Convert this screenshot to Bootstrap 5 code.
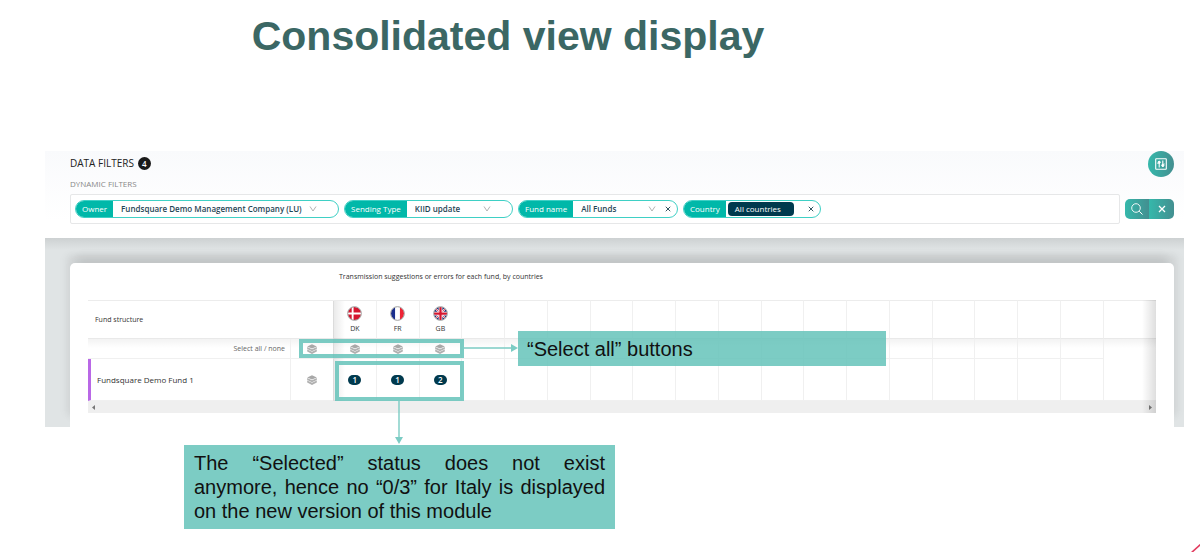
<!DOCTYPE html>
<html lang="en">
<head>
<meta charset="utf-8">
<meta name="viewport" content="width=device-width, initial-scale=1">
<title>Consolidated view display</title>
<link href="https://cdn.jsdelivr.net/npm/bootstrap@5.3.0/dist/css/bootstrap.min.css" rel="stylesheet">
<style>
  :root { --teal: #00b8a9; --navy: #003a4e; --note: rgba(95, 193, 183, .82); --line: #f0f0f0; }
  body { font-family: "Liberation Sans", Arial, sans-serif; color: #111; background: #fff; }
  .slide { min-height: 100vh; overflow: hidden; }
  .slide-title { font-size: 41px; line-height: 48px; font-weight: 700; color: #3b6764; padding: 12px 184px 91px 0; margin: 0; }
  .app { margin: 0 16px 0 45px; font-family: "Open Sans", "Noto Sans", sans-serif; background: #e0e4e5; }

  .filters { background: linear-gradient(#f9fafc, #fff 80%); padding: 0 10px 14px 25px; }
  .filters-title { font-size: 10px; line-height: 24px; color: #222; margin: 0; }
  .count { width: 13px; height: 13px; font-size: 8px; line-height: 13px; font-weight: 600; background: #1a1a1a; color: #fff; }
  .filters-sub { font-size: 8px; line-height: 17px; color: #888; margin: 0; padding-bottom: 2px; }
  .round-btn { width: 26px; height: 26px; margin-bottom: -2px; border: 0; padding: 0; background: linear-gradient(90deg, #35b8ab, #438f90); }
  .filter-box { border: 1px solid #e6e7e8; border-radius: 2px; background: #fff; height: 30px; padding: 0 4px; gap: 5px; }
  .pill { height: 18px; border: 1px solid #3fd0c5; border-radius: 9px; background: #fff; overflow: hidden; font-size: 8px; line-height: 16px; position: relative; }
  .pill-name { background: var(--teal); color: #fff; padding: 0 6px; height: 16px; white-space: nowrap; }
  .pill select { appearance: none; flex: 1 1 0; min-width: 0; border: 0; background: transparent; padding: 0 0 0 8px; font-weight: 600; color: #1f4555; height: 16px; line-height: 16px; outline: 0; }
  .pill button { border: 0; background: none; padding: 0; width: 18px; height: 16px; color: #2d4f5c; }
  .chev { right: 21px; top: 5px; pointer-events: none; }
  .tag { background: var(--navy); color: #fff; border-radius: 4px; width: 66px; height: 14px; line-height: 14px; padding-left: 7px; margin: 1px 0 0 2px; font-weight: 500; }
  .w-owner { width: 264px; } .w-type { width: 169px; } .w-fund { width: 160px; } .w-country { width: 138px; }
  .actions { margin-left: 5px; border-radius: 5px; overflow: hidden; }
  .actions button { width: 24px; height: 20px; border: 0; padding: 0; background: linear-gradient(90deg, #35b8ab, #438f90); }
  .actions button + button { width: 25px; }

  .board { background: linear-gradient(#cdd1d2, #e0e4e5 12px); padding: 25px 10px 0 25px; }
  .panel { background: #fff; border-radius: 5px 5px 0 0; padding: 7px 18px 14px; box-shadow: 0 -8px 8px rgba(0,0,0,.04), 6px -10px 8px -2px rgba(0,0,0,.05), -6px -10px 8px -2px rgba(0,0,0,.05); }
  .panel-caption { font-size: 7px; line-height: 14px; color: #333; margin: 0 0 16px 251px; }
  .grid-wrap { position: relative; }
  .fund-grid { table-layout: fixed; width: 100%; border-collapse: separate; border-spacing: 0; color: #333; background: #fff; line-height: 10px; font-size: 8px; }
  .fund-grid th, .fund-grid td { padding: 0; text-align: center; font-weight: 400; vertical-align: middle; border-right: 1px solid var(--line); }
  .fund-grid .last { border-right: 0; }
  .fund-grid thead th { height: 39px; border-top: 1px solid #ececec; border-bottom: 1px solid #e9e9e9; font-size: 7px; }
  .fund-grid thead th:first-child { text-align: left; padding-left: 7px; }
  .fund-grid .pick th, .fund-grid .pick td { height: 20px; border-bottom: 1px solid #f0f0f0; background: linear-gradient(#f3f3f3, #fff 9px); }
  .fund-grid .pick th { font-size: 7px; text-align: right; padding-right: 5px; color: #666; }
  .fund-grid .fund th, .fund-grid .fund td { height: 42px; border-bottom: 1px solid #f0f0f0; }
  .fund-grid .fund th { text-align: left; font-size: 8px; font-weight: 500; padding-left: 6px; border-left: 3px solid #b968e6; }
  .edge-left { left: 245px; top: 1px; width: 12px; height: 100px; background: linear-gradient(90deg, rgba(0,0,0,.09), rgba(0,0,0,0)); pointer-events: none; }
  .edge-right { right: 0; top: 0; bottom: 0; width: 14px; background: linear-gradient(90deg, rgba(0,0,0,0), rgba(0,0,0,.13)); pointer-events: none; }
  .c-name { width: 203px; } .c-all { width: 43px; } .c-end { width: 52px; }
  .icon-btn { border: 0; background: none; padding: 0; line-height: 0; display: block; margin: 0 auto; }
  .flag { display: block; margin: 0 auto 3px; }
  .qty { display: block; margin: 0 auto; width: 13px; height: 10px; border-radius: 5px; background: var(--navy); color: #fff; font-size: 8px; line-height: 10px; font-weight: 600; }
  .bar { height: 12px; background: #efefef; padding: 0 4px; }

  .mark-box { border: 4px solid var(--note); }
  .mark-select { left: 211px; top: 39px; width: 165px; height: 19px; }
  .mark-counts { left: 247px; top: 61px; width: 129px; height: 40px; }
  .arrow-right { left: 375px; top: 44px; }
  .arrow-down { left: 307px; top: 98px; }
  .note { background: var(--note); font: 20px/24px "Liberation Sans", Arial, sans-serif; color: #111; padding: 6px 10px; }
  .note-select { left: 430px; top: 31px; width: 368px; padding: 6px 9px 5px; }
  .note-status { width: 431px; max-width: 100%; margin: 18px 0 0 184px; }
  .full-line { display: block; text-align: justify; text-align-last: justify; }
  .corner { right: 0; bottom: 0; }
</style>
</head>
<body>
<svg class="d-none" aria-hidden="true">
  <symbol id="layers" viewBox="0 0 10 10">
    <path d="M5 .2 9.8 2.4 5 4.6 .2 2.4Z" fill="#a8a8a8"/>
    <path d="M.2 3.1 5 5.2 9.8 3.1v1.9L5 7.2.2 5ZM.2 5.6 5 7.7 9.8 5.6v2L5 9.9.2 7.6Z" fill="#b0b0b0"/>
  </symbol>
  <symbol id="chevron" viewBox="0 0 8 6"><path d="M1 .5 4 5 7 .5" fill="none" stroke="#aaa" stroke-width=".9"/></symbol>
  <symbol id="cross" viewBox="0 0 8 8"><path d="M1 1 7 7M7 1 1 7" fill="none" stroke="currentColor" stroke-width="1.3"/></symbol>
</svg>

<div class="slide position-relative">
  <h1 class="slide-title text-center">Consolidated view display</h1>

  <main class="app">
    <section class="filters">
      <div class="d-flex justify-content-between">
        <h2 class="filters-title d-flex align-items-center">DATA FILTERS <span class="count rounded-circle text-center ms-1">4</span></h2>
        <button class="round-btn rounded-circle d-flex align-items-center justify-content-center" type="button" aria-label="Filter settings">
          <svg width="12" height="12" viewBox="0 0 12 12" fill="none" stroke="#fff"><rect x=".7" y=".7" width="10.6" height="10.6" rx=".5" stroke-width="1.1"/><path d="M4.2 3v6.5M7.8 2.5V9" stroke-width="1.1"/><circle cx="4.2" cy="4.3" r="1.1" fill="#fff"/><circle cx="7.8" cy="7.4" r="1.1" fill="#fff"/><path d="M2.3 5.4h1.2M8.4 6h1.4" stroke-width=".8"/></svg>
        </button>
      </div>
      <p class="filters-sub">DYNAMIC FILTERS</p>
      <div class="d-flex align-items-center">
        <div class="filter-box d-flex align-items-center flex-grow-1">
          <div class="pill w-owner d-flex">
            <label class="pill-name" for="owner">Owner</label>
            <select id="owner"><option>Fundsquare Demo Management Company (LU)</option></select>
            <svg class="chev position-absolute" width="8" height="6"><use href="#chevron"/></svg>
          </div>
          <div class="pill w-type d-flex">
            <label class="pill-name" for="stype">Sending Type</label>
            <select id="stype"><option>KIID update</option></select>
            <svg class="chev position-absolute" width="8" height="6"><use href="#chevron"/></svg>
          </div>
          <div class="pill w-fund d-flex">
            <label class="pill-name" for="fname">Fund name</label>
            <select id="fname"><option>All Funds</option></select>
            <svg class="chev position-absolute" width="8" height="6"><use href="#chevron"/></svg>
            <button type="button" aria-label="Remove fund name"><svg class="d-block mx-auto" width="6" height="6"><use href="#cross"/></svg></button>
          </div>
          <div class="pill w-country d-flex">
            <span class="pill-name">Country</span>
            <span class="tag">All countries</span>
            <button class="ms-auto" type="button" aria-label="Remove country"><svg class="d-block mx-auto" width="6" height="6"><use href="#cross"/></svg></button>
          </div>
        </div>
        <div class="actions d-flex">
          <button type="button" aria-label="Search"><svg class="d-block mx-auto" width="12" height="12" viewBox="0 0 12 12" fill="none" stroke="#fff"><circle cx="5" cy="5" r="4.3" stroke-width=".9"/><path d="m8.2 8.2 3.3 3.3"/></svg></button>
          <button class="text-white" type="button" aria-label="Clear"><svg class="d-block mx-auto" width="8" height="8"><use href="#cross"/></svg></button>
        </div>
      </div>
    </section>

    <section class="board">
      <div class="panel">
        <p class="panel-caption">Transmission suggestions or errors for each fund, by countries</p>
        <div class="grid-wrap">
          <table class="fund-grid">
            <colgroup><col class="c-name"><col class="c-all"><col span="18"><col class="c-end"></colgroup>
            <thead>
              <tr>
                <th colspan="2" scope="col">Fund structure</th>
                <th scope="col"><svg class="flag" width="15" height="15" viewBox="0 0 16 16"><clipPath id="r"><circle cx="8" cy="8" r="7"/></clipPath><g clip-path="url(#r)"><path fill="#d5162f" d="M0 0h16v16H0z"/><path stroke="#fff" stroke-width="2" d="M6 0v16M0 8h16"/></g><circle cx="8" cy="8" r="7.3" fill="none" stroke="#999"/></svg>DK</th>
                <th scope="col"><svg class="flag" width="15" height="15" viewBox="0 0 16 16"><g clip-path="url(#r)"><path fill="#fff" d="M0 0h16v16H0z"/><path fill="#1c2f8c" d="M0 0h5.4v16H0z"/><path fill="#ee2536" d="M10.6 0H16v16h-5.4z"/></g><circle cx="8" cy="8" r="7.3" fill="none" stroke="#999"/></svg>FR</th>
                <th scope="col"><svg class="flag" width="15" height="15" viewBox="0 0 16 16"><g clip-path="url(#r)"><path fill="#1c2f74" d="M0 0h16v16H0z"/><path stroke="#fff" stroke-width="2" d="m0 0 16 16M16 0 0 16"/><path stroke="#d5162f" stroke-width=".8" d="m0 0 16 16M16 0 0 16"/><path stroke="#fff" stroke-width="4" d="M8 0v16M0 8h16"/><path stroke="#d5162f" stroke-width="2.4" d="M8 0v16M0 8h16"/></g><circle cx="8" cy="8" r="7.3" fill="none" stroke="#999"/></svg>GB</th>
                <th></th><th></th><th></th><th></th><th></th><th></th><th></th><th></th><th></th><th></th><th></th><th></th><th></th><th></th><th></th><th class="last"></th>
              </tr>
            </thead>
            <tbody>
              <tr class="pick">
                <th scope="row">Select all / none</th>
                <td><button class="icon-btn" type="button" aria-label="Select all"><svg width="10" height="10"><use href="#layers"/></svg></button></td>
                <td><button class="icon-btn" type="button" aria-label="Select all DK"><svg width="10" height="10"><use href="#layers"/></svg></button></td>
                <td><button class="icon-btn" type="button" aria-label="Select all FR"><svg width="10" height="10"><use href="#layers"/></svg></button></td>
                <td><button class="icon-btn" type="button" aria-label="Select all GB"><svg width="10" height="10"><use href="#layers"/></svg></button></td>
                <td></td><td></td><td></td><td></td><td></td><td></td><td></td><td></td><td></td><td></td><td></td><td></td><td></td><td></td><td></td><td class="last border-bottom-0"></td>
              </tr>
              <tr class="fund">
                <th scope="row">Fundsquare Demo Fund 1</th>
                <td><button class="icon-btn" type="button" aria-label="Select fund"><svg width="10" height="10"><use href="#layers"/></svg></button></td>
                <td><span class="qty">1</span></td><td><span class="qty">1</span></td><td><span class="qty">2</span></td>
                <td></td><td></td><td></td><td></td><td></td><td></td><td></td><td></td><td></td><td></td><td></td><td></td><td></td><td></td><td></td><td class="last"></td>
              </tr>
            </tbody>
          </table>
          <div class="bar d-flex justify-content-between align-items-center">
            <svg width="3" height="5"><path d="M3 0v5L0 2.5Z" fill="#777"/></svg>
            <svg width="3" height="5"><path d="M0 0v5l3-2.5Z" fill="#777"/></svg>
          </div>
          <div class="edge-left position-absolute"></div>
          <div class="edge-right position-absolute"></div>
          <div class="mark-box mark-select position-absolute pe-none"></div>
          <div class="mark-box mark-counts position-absolute pe-none"></div>
          <svg class="arrow-right position-absolute" width="55" height="8"><path d="M0 3.3h48V0l7 4-7 4V4.7H0Z" fill="#7cccc4"/></svg>
          <svg class="arrow-down position-absolute" width="8" height="46"><path d="M3.3 0v39H0l4 7 4-7H4.7V0Z" fill="#7cccc4"/></svg>
          <div class="note note-select position-absolute">“Select all” buttons</div>
        </div>
      </div>
    </section>
  </main>

  <p class="note note-status"><span class="full-line">The “Selected” status does not exist</span> <span class="full-line">anymore, hence no “0/3” for Italy is displayed</span> on the new version of this module</p>
  <svg class="corner position-absolute" width="9" height="8"><path d="M0 9 10 0" stroke="#e23a5e" stroke-width="1.6"/></svg>
</div>
<script src="https://cdn.jsdelivr.net/npm/bootstrap@5.3.0/dist/js/bootstrap.bundle.min.js"></script>
</body>
</html>
